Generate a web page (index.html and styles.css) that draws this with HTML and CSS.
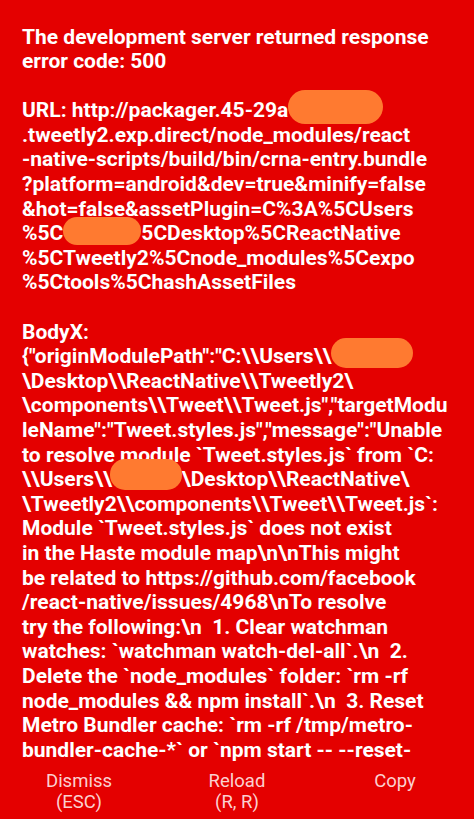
FILE: index.html
```html
<!DOCTYPE html>
<html>
<head>
<meta charset="utf-8">
<link rel="stylesheet" href="styles.css">
</head>
<body>
<div class="screen">
  <div class="content">
    <div class="ln">The development server returned response</div>
    <div class="ln">error code: 500</div>
    <div class="ln"> </div>
    <div class="ln">URL: http://packager.45-29a<span class="redact r1"></span></div>
    <div class="ln">.tweetly2.exp.direct/node_modules/react</div>
    <div class="ln">-native-scripts/build/bin/crna-entry.bundle</div>
    <div class="ln">?platform=android&amp;dev=true&amp;minify=false</div>
    <div class="ln">&amp;hot=false&amp;assetPlugin=C%3A%5CUsers</div>
    <div class="ln">%5C<span class="redact r2"></span>5CDesktop%5CReactNative</div>
    <div class="ln">%5CTweetly2%5Cnode_modules%5Cexpo</div>
    <div class="ln">%5Ctools%5ChashAssetFiles</div>
    <div class="ln"> </div>
    <div class="ln">BodyX:</div>
    <div class="ln">{"originModulePath":"C:\\Users\\<span class="redact r3"></span></div>
    <div class="ln">\Desktop\\ReactNative\\Tweetly2\</div>
    <div class="ln">\components\\Tweet\\Tweet.js","targetModu</div>
    <div class="ln">leName":"Tweet.styles.js","message":"Unable</div>
    <div class="ln">to resolve module `Tweet.styles.js` from `C:</div>
    <div class="ln">\\Users\\<span class="redact r4"></span>\Desktop\\ReactNative\</div>
    <div class="ln">\Tweetly2\\components\\Tweet\\Tweet.js`:</div>
    <div class="ln">Module `Tweet.styles.js` does not exist</div>
    <div class="ln">in the Haste module map\n\nThis might</div>
    <div class="ln">be related to https://github.com/facebook</div>
    <div class="ln">/react-native/issues/4968\nTo resolve</div>
    <div class="ln">try the following:\n  1. Clear watchman</div>
    <div class="ln">watches: `watchman watch-del-all`.\n  2.</div>
    <div class="ln">Delete the `node_modules` folder: `rm -rf</div>
    <div class="ln">node_modules &amp;&amp; npm install`.\n  3. Reset</div>
    <div class="ln">Metro Bundler cache: `rm -rf /tmp/metro-</div>
    <div class="ln">bundler-cache-*` or `npm start -- --reset-</div>
  </div>
  <div class="buttons">
    <div class="btn">Dismiss<br>(ESC)</div>
    <div class="btn">Reload<br>(R, R)</div>
    <div class="btn">Copy</div>
  </div>
</div>
</body>
</html>
```
FILE: styles.css
```css
html, body {
  margin: 0;
  padding: 0;
  background: #e40000;
}
.screen {
  width: 474px;
  height: 819px;
  display: flex;
  flex-direction: column;
  background: #e40000;
  font-family: Roboto, "Noto Sans", sans-serif;
  color: #ffffff;
  overflow: hidden;
}
.content {
  height: 739px;
  overflow: hidden;
  padding: 24.5px 0 0 22px;
  flex: none;
}
.ln {
  font-size: 21px;
  font-weight: 700;
  line-height: 24.6px;
  height: 24.6px;
  white-space: pre;
}
.redact {
  position: relative;
  display: inline-block;
  height: 1px;
}
.redact::after {
  content: "";
  position: absolute;
  background: #ff7a30;
  border-radius: 14px;
}
.r1 { width: 0; }
.r1::after { left: 0; top: -26px; width: 95px; height: 34px; border-radius: 17px; }
.r2 { width: 78px; }
.r2::after { left: 0; top: -22px; width: 78px; height: 28px; }
.r3 { width: 0; }
.r3::after { left: 0; top: -24px; width: 82px; height: 30px; border-radius: 15px; }
.r4 { width: 70px; }
.r4::after { left: -2px; top: -26px; width: 72px; height: 31px; border-radius: 15px; }
.buttons {
  display: flex;
  flex: none;
  padding-top: 7px;
}
.btn {
  flex: 1;
  text-align: center;
  font-size: 18.5px;
  line-height: 21px;
  color: #fbd0d0;
}
```
